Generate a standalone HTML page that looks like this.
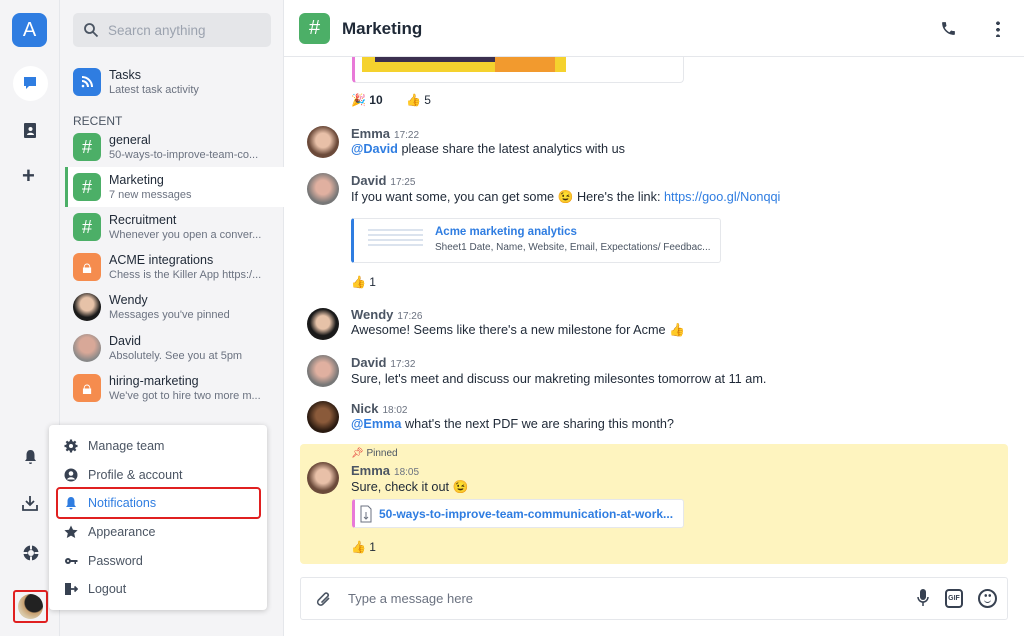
<!DOCTYPE html><html><head><meta charset="utf-8"><style>
*{box-sizing:border-box;margin:0;padding:0}
body{width:1024px;height:636px;overflow:hidden;font-family:"Liberation Sans",sans-serif;background:#fff;position:relative;color:#1f2937}
.abs{position:absolute}
.rail{left:0;top:0;width:60px;height:636px;background:#f4f4f6;border-right:1px solid #e5e7eb}
.side{left:60px;top:0;width:224px;height:636px;background:#f4f4f6;border-right:1px solid #e5e7eb}
.ic{width:28px;height:28px;border-radius:6px;color:#fff;display:flex;align-items:center;justify-content:center;font-size:18px}
.g{background:#4caf67}.o{background:#f58c4e}.b{background:#2f7de1}
.it{position:absolute;left:13px;width:210px;height:40px}
.it .ic{position:absolute;left:0;top:6px}
.it .t{position:absolute;left:36px;top:6px;font-size:12.5px;color:#1f2937}
.it .s{position:absolute;left:36px;top:22px;font-size:11px;color:#6b7280;white-space:nowrap}
.av{width:32px;height:32px;border-radius:50%;position:absolute}
.nm{position:absolute;font-size:13px;font-weight:bold;color:#4b5563}
.nm small{font-weight:normal;font-size:10px;color:#6b7280;margin-left:4px}
.tx{position:absolute;font-size:12.7px;color:#1f2937;white-space:nowrap}
.at{color:#2f7de1;font-weight:bold}
.menu{left:49px;top:425px;width:218px;height:185px;background:#fff;border-radius:4px;box-shadow:0 1px 6px rgba(0,0,0,.2)}
.mi{position:absolute;left:39px;font-size:12.5px;color:#4b5563}
.mic{position:absolute;left:15px;width:14px;height:14px}
</style></head><body>
<div class="abs rail">
 <div class="abs" style="left:12px;top:13px;width:35px;height:34px;background:#2f7de1;border-radius:8px;color:#fff;font-size:20px;display:flex;align-items:center;justify-content:center">A</div>
 <div class="abs" style="left:13px;top:66px;width:35px;height:35px;background:#fff;border-radius:50%"></div>
 <svg class="abs" style="left:22px;top:75px" width="16" height="16" viewBox="0 0 16 16"><path d="M2 2h12v9H7l-3 3v-3H2z" fill="#2f7de1"/></svg>
 <svg class="abs" style="left:22px;top:122px" width="16" height="17" viewBox="0 0 16 17"><rect x="2" y="1" width="12" height="15" rx="1" fill="#374151"/><circle cx="8.5" cy="7" r="2" fill="#fff"/><path d="M5 13c0-3 7-3 7 0z" fill="#fff"/></svg>
 <div class="abs" style="left:22px;top:167px;font-size:22px;font-weight:bold;color:#374151;line-height:18px">+</div>
 <svg class="abs" style="left:23px;top:449px" width="15" height="16" viewBox="0 0 15 16"><path d="M7.5 1C4.5 1 3.5 3.5 3.5 6v4L2 12h11l-1.5-2V6c0-2.5-1-5-4-5z M6 13.5h3a1.5 1.5 0 0 1-3 0z" fill="#374151"/></svg>
 <svg class="abs" style="left:21px;top:494px" width="18" height="18" viewBox="0 0 18 18" fill="none" stroke="#374151" stroke-width="1.8"><path d="M9 2v9M5 7l4 4 4-4M2 11v5h14v-5"/></svg>
 <svg class="abs" style="left:22px;top:544px" width="18" height="18" viewBox="0 0 18 18"><circle cx="9" cy="9" r="7.5" fill="#374151"/><circle cx="9" cy="9" r="3" fill="#f4f4f6"/><path d="M9 1.5v4M9 12.5v4M1.5 9h4M12.5 9h4" stroke="#f4f4f6" stroke-width="2"/></svg>
 <div class="abs" style="left:13px;top:590px;width:35px;height:33px;border:2px solid #e02020;border-radius:3px"></div>
 <div class="abs" style="left:18px;top:594px;width:25px;height:25px;border-radius:50%;background:radial-gradient(circle at 65% 35%,#222 40%,#c8a070 45%,#d9c9a8 70%)"></div>
</div>
<div class="abs side">
 <div class="abs" style="left:13px;top:13px;width:198px;height:34px;background:#e5e6e9;border-radius:5px"></div>
 <svg class="abs" style="left:23px;top:22px" width="16" height="16" viewBox="0 0 16 16" fill="none" stroke="#4b5563" stroke-width="1.8"><circle cx="6.5" cy="6.5" r="4.5"/><path d="M10 10l4.5 4.5"/></svg>
 <div class="abs" style="left:48px;top:23px;font-size:13.5px;color:#9ca3af">Searcn anything</div>
 <div class="it" style="top:62px"><div class="ic b"><svg width="14" height="14" viewBox="0 0 14 14" fill="none" stroke="#fff" stroke-width="2"><path d="M2 2a10 10 0 0 1 10 10M2 6a6 6 0 0 1 6 6"/><circle cx="3" cy="11" r="1.3" fill="#fff" stroke="none"/></svg></div><div class="t">Tasks</div><div class="s">Latest task activity</div></div>
 <div class="abs" style="left:13px;top:114px;font-size:12px;color:#4b5563">RECENT</div>
 <div class="it" style="top:127px"><div class="ic g">#</div><div class="t">general</div><div class="s">50-ways-to-improve-team-co...</div></div>
 <div class="abs" style="left:5px;top:167px;width:219px;height:40px;background:#fff;border-left:3px solid #4caf67"></div>
 <div class="it" style="top:167px"><div class="ic g">#</div><div class="t">Marketing</div><div class="s">7 new messages</div></div>
 <div class="it" style="top:207px"><div class="ic g">#</div><div class="t">Recruitment</div><div class="s">Whenever you open a conver...</div></div>
 <div class="it" style="top:247px"><div class="ic o">🔒︎</div><div class="t">ACME integrations</div><div class="s">Chess is the Killer App https:/...</div></div>
 <div class="it" style="top:287px"><div class="ic" style="border-radius:50%;background:radial-gradient(circle at 50% 40%,#e6c2a8 30%,#1a1a1a 60%)"></div><div class="t">Wendy</div><div class="s">Messages you've pinned</div></div>
 <div class="it" style="top:328px"><div class="ic" style="border-radius:50%;background:radial-gradient(circle at 50% 40%,#d8a898 35%,#888 70%)"></div><div class="t">David</div><div class="s">Absolutely. See you at 5pm</div></div>
 <div class="it" style="top:368px"><div class="ic o">🔒︎</div><div class="t">hiring-marketing</div><div class="s">We've got to hire two more m...</div></div>
</div>
<div class="abs menu">
 <svg class="mic" style="top:14px" viewBox="0 0 14 14"><circle cx="7" cy="7" r="5" fill="#374151"/><path d="M7 0.5v13M0.5 7h13M2.4 2.4l9.2 9.2M11.6 2.4l-9.2 9.2" stroke="#374151" stroke-width="2.2"/><circle cx="7" cy="7" r="2" fill="#fff"/></svg><div class="mi" style="top:14px">Manage team</div>
 <svg class="mic" style="top:43px" viewBox="0 0 14 14"><circle cx="7" cy="7" r="6.5" fill="#374151"/><circle cx="7" cy="5.5" r="2.3" fill="#fff"/><path d="M3 11.5c1-3 7-3 8 0" fill="#fff"/></svg><div class="mi" style="top:43px">Profile &amp; account</div>
 <div class="abs" style="left:7px;top:62px;width:205px;height:32px;border:2px solid #e02020;border-radius:4px"></div>
 <svg class="mic" style="top:71px" viewBox="0 0 14 14"><path d="M7 1C4.5 1 3.5 3 3.5 5.5v3.5L2 11h10l-1.5-2V5.5C10.5 3 9.5 1 7 1zM5.5 12h3a1.5 1.5 0 0 1-3 0z" fill="#2f7de1"/></svg><div class="mi" style="top:71px;color:#2f7de1">Notifications</div>
 <svg class="mic" style="top:100px" viewBox="0 0 14 14"><path d="M7 .5l2 4.3 4.6.5-3.4 3.1 1 4.6L7 10.6 2.8 13l1-4.6L.4 5.3l4.6-.5z" fill="#374151"/></svg><div class="mi" style="top:100px">Appearance</div>
 <svg class="mic" style="top:129px" viewBox="0 0 14 14"><circle cx="4" cy="7" r="3" fill="#374151"/><circle cx="4" cy="7" r="1" fill="#fff"/><path d="M6 6h7.5v2H12v2h-1.5V8H6z" fill="#374151"/></svg><div class="mi" style="top:129px">Password</div>
 <svg class="mic" style="top:157px" viewBox="0 0 14 14"><path d="M1 1h6v12H1z" fill="#374151"/><path d="M7 7h6M10.5 4.5L13 7l-2.5 2.5" stroke="#374151" stroke-width="1.7" fill="none"/></svg><div class="mi" style="top:157px">Logout</div>
</div>
<div class="abs" style="left:284px;top:0;width:740px;height:57px;border-bottom:1px solid #e5e7eb;background:#fff"></div>
<div class="abs ic g" style="left:299px;top:13px;width:31px;height:31px;font-size:20px">#</div>
<div class="abs" style="left:342px;top:19px;font-size:17px;font-weight:bold;color:#1f2937">Marketing</div>
<svg class="abs" style="left:940px;top:20px" width="17" height="17" viewBox="0 0 24 24"><path d="M6.6 10.8c1.4 2.8 3.8 5.1 6.6 6.6l2.2-2.2c.3-.3.7-.4 1-.2 1.1.4 2.3.6 3.6.6.6 0 1 .4 1 1V20c0 .6-.4 1-1 1C10.6 21 3 13.4 3 4c0-.6.4-1 1-1h3.5c.6 0 1 .4 1 1 0 1.3.2 2.5.6 3.6.1.3 0 .7-.2 1z" fill="#374151"/></svg>
<div class="abs" style="left:996px;top:20px;width:4px;height:17px;background:radial-gradient(circle,#374151 1.8px,transparent 2px) 0 0/4px 6.5px"></div>
<div class="abs" style="left:352px;top:57px;width:332px;height:26px;border:1px solid #e5e7eb;border-top:none;border-left:3px solid #e879d8;border-radius:0 0 4px 4px"></div>
<div class="abs" style="left:362px;top:57px;width:204px;height:15px;background:#f5d22e"></div>
<div class="abs" style="left:375px;top:57px;width:122px;height:5px;background:#3b2f4f"></div>
<div class="abs" style="left:495px;top:57px;width:60px;height:15px;background:#f29a2e"></div>
<div class="tx" style="left:351px;top:93px;font-size:12px">🎉 <b>10</b> &nbsp; &nbsp; &nbsp; 👍 5</div>
<div class="av" style="left:307px;top:126px;background:radial-gradient(circle at 50% 45%,#e8c0a8 30%,#6b4a3a 60%)"></div>
<div class="nm" style="left:351px;top:126px">Emma<small>17:22</small></div>
<div class="tx" style="left:351px;top:142px"><span class="at">@David</span> please share the latest analytics with us</div>
<div class="av" style="left:307px;top:173px;background:radial-gradient(circle at 50% 45%,#e0b0a0 30%,#777 65%)"></div>
<div class="nm" style="left:351px;top:173px">David<small>17:25</small></div>
<div class="tx" style="left:351px;top:190px">If you want some, you can get some 😉 Here's the link: <span style="color:#2f7de1">https://goo.gl/Nonqqi</span></div>
<div class="abs" style="left:351px;top:218px;width:370px;height:45px;border:1px solid #e5e7eb;border-left:3px solid #2f7de1;border-radius:3px"></div>
<div class="abs" style="left:368px;top:229px;width:55px;height:20px;background:repeating-linear-gradient(#dbe3ee 0 2px,#fff 2px 5px)"></div>
<div class="abs" style="left:435px;top:226px;font-size:11.5px;font-weight:bold;color:#2f7de1">Acme marketing analytics</div>
<div class="abs" style="left:435px;top:242px;font-size:10px;color:#4b5563">Sheet1 Date, Name, Website, Email, Expectations/ Feedbac...</div>
<div class="tx" style="left:351px;top:275px;font-size:12px">👍 1</div>
<div class="av" style="left:307px;top:308px;background:radial-gradient(circle at 50% 45%,#e6c2a8 28%,#1a1a1a 55%)"></div>
<div class="nm" style="left:351px;top:307px">Wendy<small>17:26</small></div>
<div class="tx" style="left:351px;top:323px">Awesome! Seems like there's a new milestone for Acme 👍</div>
<div class="av" style="left:307px;top:355px;background:radial-gradient(circle at 50% 45%,#e0b0a0 30%,#777 65%)"></div>
<div class="nm" style="left:351px;top:355px">David<small>17:32</small></div>
<div class="tx" style="left:351px;top:372px">Sure, let's meet and discuss our makreting milesontes tomorrow at 11 am.</div>
<div class="av" style="left:307px;top:401px;background:radial-gradient(circle at 50% 45%,#8a5a3a 30%,#2a1a10 65%)"></div>
<div class="nm" style="left:351px;top:401px">Nick<small>18:02</small></div>
<div class="tx" style="left:351px;top:417px"><span class="at">@Emma</span> what's the next PDF we are sharing this month?</div>
<div class="abs" style="left:300px;top:444px;width:708px;height:120px;background:#fef4bf;border-radius:4px"></div>
<div class="abs" style="left:351px;top:448px;font-size:10px;color:#4b5563"><span style="color:#e02020">📌︎</span> Pinned</div>
<div class="av" style="left:307px;top:462px;background:radial-gradient(circle at 50% 45%,#e8c0a8 30%,#6b4a3a 60%)"></div>
<div class="nm" style="left:351px;top:463px">Emma<small>18:05</small></div>
<div class="tx" style="left:351px;top:480px">Sure, check it out 😉</div>
<div class="abs" style="left:352px;top:499px;width:332px;height:29px;background:#fff;border:1px solid #e5e7eb;border-left:3px solid #e879d8;border-radius:3px"></div>
<svg class="abs" style="left:360px;top:505px" width="12" height="18" viewBox="0 0 12 18" fill="none" stroke="#6b7280" stroke-width="1"><path d="M1 1h7l3 3v13H1z M6 7v7M4 12l2 2 2-2"/></svg>
<div class="abs" style="left:379px;top:507px;font-size:12px;font-weight:bold;color:#2f7de1">50-ways-to-improve-team-communication-at-work...</div>
<div class="tx" style="left:351px;top:540px;font-size:12px">👍 1</div>
<div class="abs" style="left:300px;top:577px;width:708px;height:43px;border:1px solid #e5e7eb;border-radius:3px"></div>
<svg class="abs" style="left:315px;top:589px" width="18" height="20" viewBox="0 0 18 20" fill="none" stroke="#4b5563" stroke-width="1.6"><path d="M14 9l-6.5 6.5a3 3 0 0 1-4.2-4.2L10 4.5a2 2 0 0 1 2.8 2.8L6.5 13.6"/></svg>
<div class="abs" style="left:348px;top:591px;font-size:13px;color:#6b7280">Type a message here</div>
<svg class="abs" style="left:917px;top:588px" width="12" height="20" viewBox="0 0 12 20"><rect x="3" y="1" width="6" height="11" rx="3" fill="#374151"/><path d="M1 9a5 5 0 0 0 10 0M6 14v4" stroke="#374151" stroke-width="1.5" fill="none"/></svg>
<div class="abs" style="left:945px;top:589px;width:18px;height:19px;border:2px solid #374151;border-radius:4px;font-size:7px;font-weight:bold;text-align:center;line-height:15px;color:#374151">GIF</div>
<div class="abs" style="left:978px;top:589px;width:19px;height:19px;border:2px solid #374151;border-radius:50%"></div>
<div class="abs" style="left:984px;top:594px;width:7px;height:9px;background:radial-gradient(circle,#374151 1.2px,transparent 1.5px) 0 0/3.5px 3px no-repeat,radial-gradient(circle,#374151 1.2px,transparent 1.5px) 4px 0/3.5px 3px no-repeat;border-bottom:1.5px solid #374151;border-radius:0 0 4px 4px"></div>
</body></html>
